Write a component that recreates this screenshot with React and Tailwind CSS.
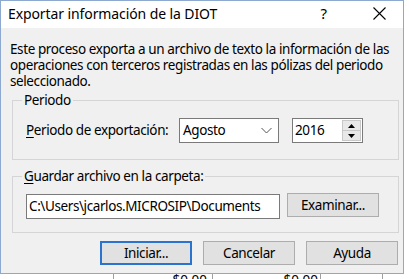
import React from "react";

const font = "font-['Noto_Sans',sans-serif]";

function Button({ children, primary, className = "" }) {
  return (
    <div
      className={`flex items-center justify-center h-[24px] w-[92px] bg-[#e1e1e1] text-black ${
        primary ? "border-2 border-[#2a74cf]" : "border border-[#adadad]"
      } ${className}`}
    >
      {children}
    </div>
  );
}

export default function App() {
  return (
    <div className={`w-[409px] h-[279px] bg-white overflow-hidden ${font} text-black`}>
      <div className="w-[404px] h-[274px] border border-[#8ea9d0] flex flex-col bg-[#f0f0f0]">
        {/* title bar */}
        <div className="h-[27px] bg-white flex items-center pl-[7px] pr-[17px] pb-[2px]">
          <span className="text-[14px] leading-none tracking-[-0.1px]">Exportar información de la DIOT</span>
          <span className="ml-auto text-[15px] leading-none">?</span>
          <svg className="ml-[46px]" width="13" height="13" viewBox="0 0 13 13">
            <path d="M0.5 0.5 L12.5 12.5 M12.5 0.5 L0.5 12.5" stroke="#000" strokeWidth="1.1" fill="none" />
          </svg>
        </div>
        {/* body */}
        <div className="flex flex-col pl-[9px] text-[13.5px] tracking-[-0.4px]">
          <p className="pt-[13px] leading-[16px] w-[394px]">
            Este proceso exporta a un archivo de texto la información de las operaciones con terceros registradas en las pólizas del periodo seleccionado.
          </p>
          <fieldset className="mt-[3px] ml-[2px] w-[387px] border border-[#d5d5d5]">
            <legend className="ml-[9px] px-[2px] leading-[16px]">Periodo</legend>
            <div className="flex items-center pl-[13px] pt-[10px] pb-[16px]">
              <span className="w-[153px]">
                <span className="underline underline-offset-2">P</span>eriodo de exportación:
              </span>
              <div className="w-[100px] h-[25px] bg-white border border-[#7a7a7a] flex items-center pl-[3px] pr-[6px]">
                <span>Agosto</span>
                <svg className="ml-auto" width="11" height="7" viewBox="0 0 11 7">
                  <path d="M0.5 1 L5.5 6 L10.5 1" stroke="#555" strokeWidth="1" fill="none" />
                </svg>
              </div>
              <div className="ml-[13px] w-[71px] h-[25px] bg-white border border-[#7a7a7a] flex">
                <span className="flex items-center pl-[2px] flex-1">2016</span>
                <div className="w-[19px] flex flex-col my-[1px] mr-[1px]">
                  <div className="flex-1 bg-[#e8e8e8] border border-[#c8c8c8] flex items-center justify-center">
                    <svg width="7" height="4" viewBox="0 0 7 4"><path d="M3.5 0 L7 4 L0 4 Z" fill="#000" /></svg>
                  </div>
                  <div className="flex-1 bg-[#e8e8e8] border border-t-0 border-[#c8c8c8] flex items-center justify-center">
                    <svg width="7" height="4" viewBox="0 0 7 4"><path d="M0 0 L7 0 L3.5 4 Z" fill="#000" /></svg>
                  </div>
                </div>
              </div>
            </div>
          </fieldset>
          <fieldset className="mt-[8px] ml-[2px] w-[387px] border border-[#d5d5d5]">
            <legend className="ml-[9px] px-[2px] leading-[16px]">
              <span className="underline underline-offset-2">G</span>uardar archivo en la carpeta:
            </legend>
            <div className="flex items-start pl-[13px] pt-[10px] pb-[13px]">
              <div className="w-[254px] h-[25px] bg-white border border-[#7a7a7a] flex items-center pl-[2px]">
                C:\Users\jcarlos.MICROSIP\Documents
              </div>
              <Button className="ml-[7px] h-[23px] -mt-[1px]">Examinar...</Button>
            </div>
          </fieldset>
          <div className="flex justify-end gap-[11px] pr-[5px] mt-[8px]">
            <Button primary className="w-[91px]">Iniciar...</Button>
            <Button>Cancelar</Button>
            <Button>Ayuda</Button>
          </div>
        </div>
      </div>
      {/* content under the window */}
      <div className="h-[5px] flex text-[13.5px] leading-none">
        <div className="w-[113px]" />
        <div className="w-[99px] border-l border-[#a0a0a0] text-right pr-[5px]">$0.00</div>
        <div className="w-[108px] border-l border-[#a0a0a0] text-right pr-[2px]">$0.00</div>
        <div className="w-[62px] border-l border-[#a0a0a0] text-center">- - -</div>
        <div className="flex-1 border-l border-[#a0a0a0]" />
      </div>
    </div>
  );
}
